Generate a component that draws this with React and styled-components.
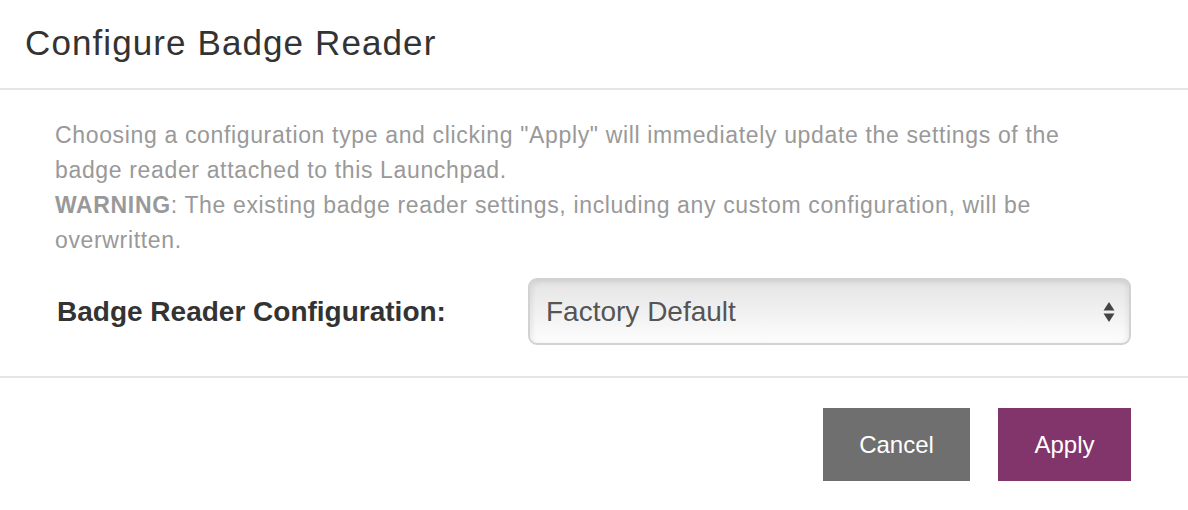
import React from "react";
import styled, { createGlobalStyle } from "styled-components";

const Global = createGlobalStyle`
  html, body { margin: 0; padding: 0; background: #fff; }
  body { font-family: "Liberation Sans", Arial, Helvetica, sans-serif; }
  * { box-sizing: border-box; }
`;

const Dialog = styled.div`
  width: 1188px;
  height: 510px;
  background: #fff;
  display: flex;
  flex-direction: column;
`;

const Header = styled.div`
  height: 90px;
  padding: 0 25px;
  display: flex;
  align-items: center;
  border-bottom: 2px solid #e5e5e5;
`;

const Title = styled.h1`
  margin: 0;
  margin-top: -2px;
  font-size: 35px;
  letter-spacing: 1.1px;
  font-weight: 400;
  color: #333;
`;

const Body = styled.div`
  padding: 28px 57px 0 55px;
  height: 288px;
  border-bottom: 2px solid #e5e5e5;
`;

const Intro = styled.p`
  margin: 0;
  font-size: 23px;
  letter-spacing: 0.65px;
  line-height: 35px;
  color: #999;
`;

const Strong = styled.strong`
  font-weight: 700;
`;

const FormRow = styled.div`
  margin-top: 20px;
  display: flex;
  align-items: center;
`;

const Label = styled.label`
  width: 473px;
  padding-left: 2px;
  font-size: 28px;
  font-weight: 700;
  color: #333;
`;

const SelectBox = styled.div`
  position: relative;
  width: 603px;
  height: 67px;
  border: 2px solid #d2d2d2;
  border-radius: 9px;
  background: linear-gradient(#e4e4e4, #fdfdfd);
  box-shadow: inset 3px 3px 4px rgba(0, 0, 0, 0.06), inset -3px 0 4px rgba(0,0,0,0.05);
  display: flex;
  align-items: center;
  padding: 0 16px;
  font-size: 28px;
  color: #555;
`;

const Arrows = styled.svg`
  position: absolute;
  right: 14px;
  top: 50%;
  transform: translateY(-50%);
`;

const Footer = styled.div`
  display: flex;
  justify-content: flex-end;
  gap: 28px;
  padding: 30px 57px 0 0;
`;

const Button = styled.button`
  height: 73px;
  width: ${(p) => p.$w}px;
  border: none;
  background: ${(p) => p.$bg};
  color: #fff;
  font-family: inherit;
  font-size: 24px;
  padding: 0;
`;

export default function App() {
  return (
    <>
      <Global />
      <Dialog>
        <Header>
          <Title>Configure Badge Reader</Title>
        </Header>
        <Body>
          <Intro>
            Choosing a configuration type and clicking "Apply" will immediately update the settings of the badge reader attached to this Launchpad.
            <br />
            <Strong>WARNING</Strong>: The existing badge reader settings, including any custom configuration, will be overwritten.
          </Intro>
          <FormRow>
            <Label>Badge Reader Configuration:</Label>
            <SelectBox>
              Factory Default
              <Arrows width="12" height="22" viewBox="0 0 12 22">
                <path d="M6 1 L11.5 9.5 H0.5 Z" fill="#444" />
                <path d="M6 21 L11.5 12.5 H0.5 Z" fill="#444" />
              </Arrows>
            </SelectBox>
          </FormRow>
        </Body>
        <Footer>
          <Button $w={147} $bg="#6f6f6f">Cancel</Button>
          <Button $w={133} $bg="#82356b">Apply</Button>
        </Footer>
      </Dialog>
    </>
  );
}
